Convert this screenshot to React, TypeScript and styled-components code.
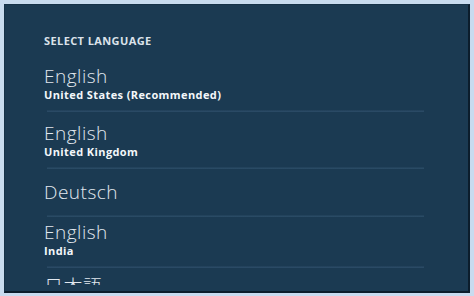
import React from "react";
import styled, { createGlobalStyle } from "styled-components";

const GlobalStyle = createGlobalStyle`
  html, body {
    margin: 0;
    padding: 0;
    background: #c8dbef;
  }
  body {
    font-family: "Open Sans", "Noto Sans CJK JP", sans-serif;
  }
`;

const Panel = styled.div`
  box-sizing: border-box;
  display: flex;
  flex-direction: column;
  margin: 4px 0 0 4px;
  width: 466px;
  height: 289px;
  padding: 29px 0 6px 39px;
  background: #1b3a52;
  border-top: 1px solid #163248;
  border-left: 1px solid #163248;
  border-right: 2px solid #0c1d2c;
  border-bottom: 2px solid #0c1d2c;
`;

const Heading = styled.h2`
  margin: 0;
  font-size: 11px;
  line-height: 14px;
  font-weight: 700;
  letter-spacing: 0.4px;
  color: #dbe2ea;
  text-transform: uppercase;
`;

const List = styled.ul`
  flex: 1;
  min-height: 0;
  overflow: hidden;
  list-style: none;
  margin: 7px 0 0;
  padding: 0;
`;

const Row = styled.li<{ $top: number; $bottom: number }>`
  padding-top: ${(p) => p.$top}px;
  padding-bottom: ${(p) => p.$bottom}px;
`;

const Name = styled.div`
  font-size: 19px;
  line-height: 22px;
  font-weight: 300;
  letter-spacing: 0.5px;
  color: #e1e8ef;
`;

const Region = styled.div`
  margin-top: 1px;
  font-size: 11px;
  line-height: 14px;
  font-weight: 700;
  letter-spacing: 0.4px;
  color: #f4f7fa;
`;

const Divider = styled.li`
  margin-left: 3px;
  width: 377px;
  height: 2px;
  background: linear-gradient(#203f58, #2d4e69);
`;

type Language = { name: string; region?: string; top: number; bottom: number };

const languages: Language[] = [
  { name: "English", region: "United States (Recommended)", top: 10, bottom: 8 },
  { name: "English", region: "United Kingdom", top: 10, bottom: 8 },
  { name: "Deutsch", top: 12, bottom: 12 },
  { name: "English", region: "India", top: 4, bottom: 8 },
  { name: "日本語", top: 8, bottom: 8 },
];

export default function App() {
  return (
    <>
      <GlobalStyle />
      <Panel>
        <Heading>Select Language</Heading>
        <List>
          {languages.map((lang, i) => (
            <React.Fragment key={i}>
              {i > 0 && <Divider />}
              <Row $top={lang.top} $bottom={lang.bottom}>
                <Name>{lang.name}</Name>
                {lang.region && <Region>{lang.region}</Region>}
              </Row>
            </React.Fragment>
          ))}
        </List>
      </Panel>
    </>
  );
}
